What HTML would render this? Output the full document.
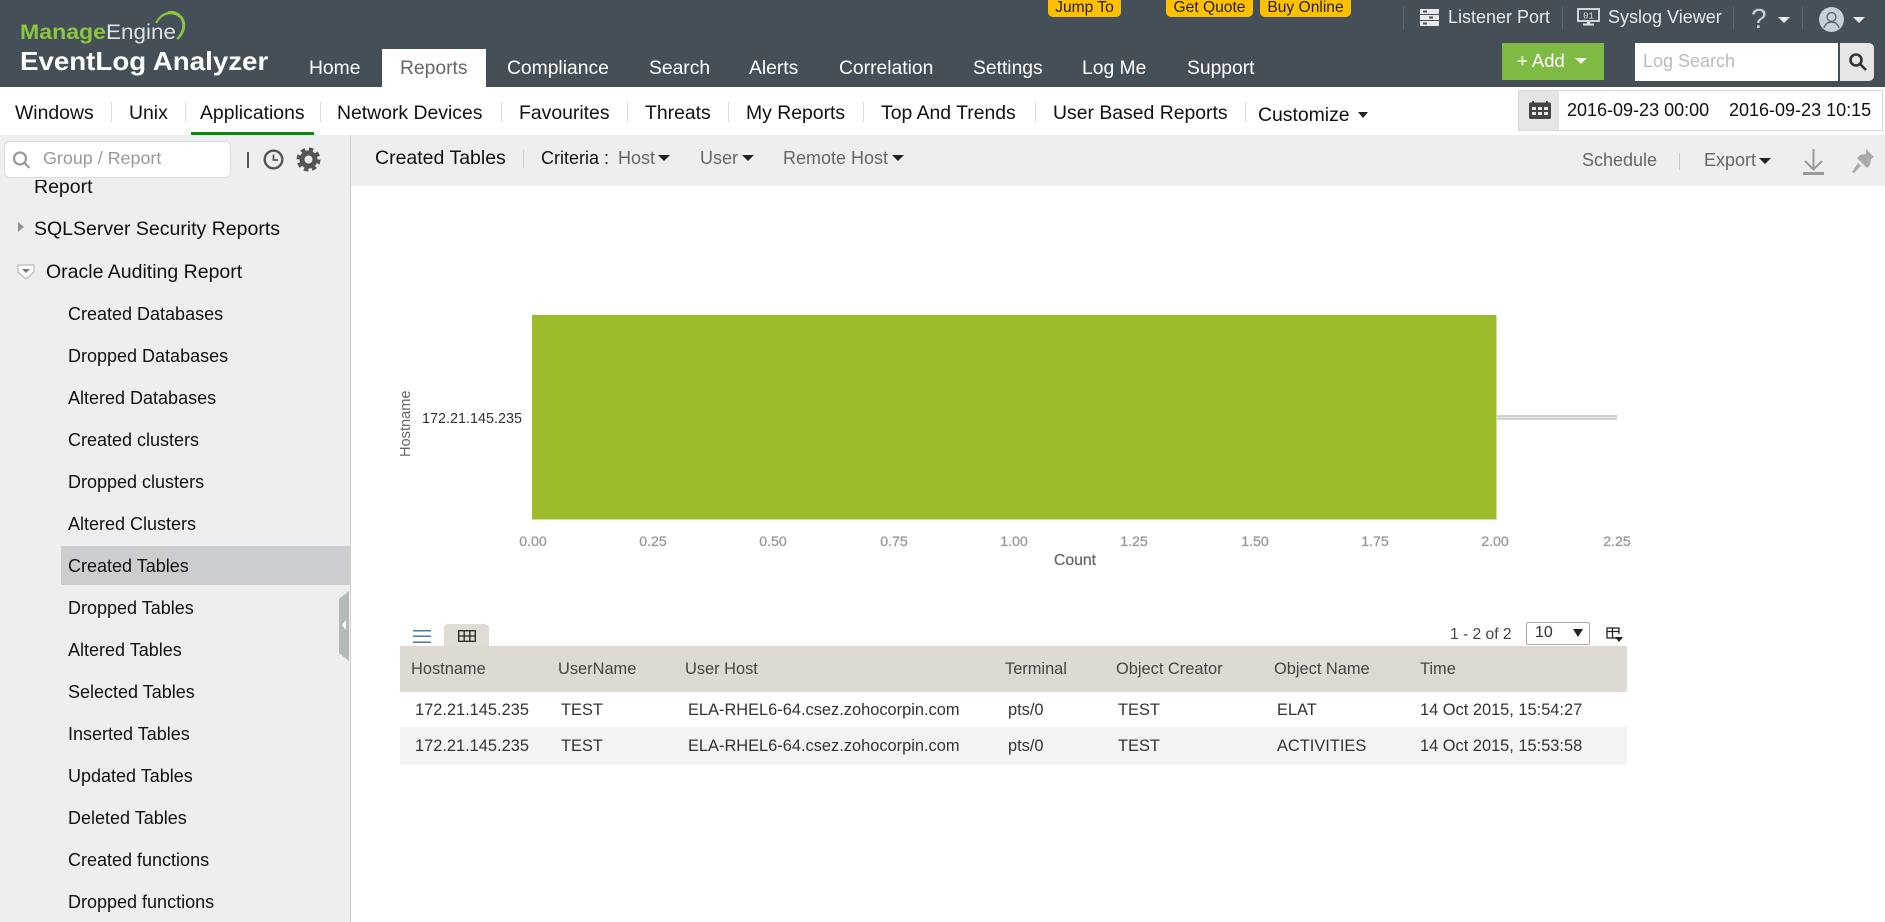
<!DOCTYPE html>
<html><head><meta charset="utf-8"><title>EventLog Analyzer</title>
<style>
html,body{margin:0;padding:0;background:#fff}
body{width:1885px;height:922px;position:relative;overflow:hidden;font-family:"Liberation Sans",Arial,sans-serif;color:#111}
div,span,svg{position:absolute}
.t{white-space:nowrap;line-height:20px;height:20px}
.nav{font-size:19.3px;color:#fff;top:59px}
.sub{font-size:19.4px;color:#111;top:103px}
.sep{width:1px;height:20px;top:102px;background:#d6dbe0}
.hs{width:1px;background:#5d6871;top:7px;height:22px}
.yb{background:#ffc000;top:0;height:17px;border-radius:0 0 5px 5px;font-size:15.6px;line-height:15px;color:#222;text-align:center}
.si{font-size:18px;left:68px;color:#111}
.car{width:0;height:0;border-left:6px solid transparent;border-right:6px solid transparent;border-top:6px solid #222}
.g{font-size:18px;color:#666}
.th{font-size:16.4px;color:#444;top:659px}
.td{font-size:16.4px;color:#333}
.tk{font-size:14.2px;color:#999;top:532px;width:60px;text-align:center;-webkit-text-stroke:.3px #999}
</style></head><body>

<!-- header -->
<div style="left:0;top:0;width:1885px;height:87px;background:#444f58"></div>
<div class="t" style="left:20px;top:23px;font-size:21px;font-weight:bold;color:#8cc63f;transform-origin:0 50%;transform:scaleX(1.1)">Manage</div>
<div class="t" style="left:106px;top:23px;font-size:21px;color:#dfe3e6;transform-origin:0 50%;transform:scaleX(1.07)">Engine</div>
<svg style="left:150px;top:8px" width="40" height="34" viewBox="0 0 40 34" fill="none" stroke="#8cc63f"><path d="M6 15C12 4 24 1 31 9c4 6 3 15-4 22" stroke-width="2"/><path d="M12 8c8-5 17-2 20 4 3 6 1 13-4 19" stroke-width="1.600"/><path d="M18 4c7-2 14 3 16 9 2 7-1 13-6 18" stroke-width="1.300"/></svg>
<div class="t" style="left:20px;top:49px;height:24px;line-height:24px;font-size:26px;font-weight:bold;color:#fff;transform-origin:0 50%;transform:scaleX(1.065)">EventLog Analyzer</div>

<div style="left:382px;top:49px;width:104px;height:38px;background:#fff"></div>
<div class="t nav" style="left:309px">Home</div>
<div class="t nav" style="left:400px;color:#6b6663">Reports</div>
<div class="t nav" style="left:507px">Compliance</div>
<div class="t nav" style="left:649px">Search</div>
<div class="t nav" style="left:749px">Alerts</div>
<div class="t nav" style="left:839px">Correlation</div>
<div class="t nav" style="left:973px">Settings</div>
<div class="t nav" style="left:1082px">Log Me</div>
<div class="t nav" style="left:1187px">Support</div>

<div class="yb" style="left:1048px;width:73px">Jump To</div>
<div class="yb" style="left:1166px;width:87px">Get Quote</div>
<div class="yb" style="left:1260px;width:91px">Buy Online</div>

<div class="hs" style="left:1403px"></div>
<svg style="left:1420px;top:9px" width="19" height="17" viewBox="0 0 19 17"><rect width="19" height="5" fill="#e8eaec"/><rect y="6" width="19" height="5" fill="#e8eaec"/><rect y="12" width="19" height="5" fill="#e8eaec"/><rect x="3" y="1.500" width="4" height="2" fill="#444f58"/><rect x="9" y="7.500" width="4" height="2" fill="#444f58"/><rect x="3" y="13.500" width="4" height="2" fill="#444f58"/></svg>
<div class="t" style="left:1448px;top:7px;font-size:18px;color:#e8eaec">Listener Port</div>
<div class="hs" style="left:1562px"></div>
<svg style="left:1577px;top:8px" width="23" height="18" viewBox="0 0 23 18"><rect x="1" y="1" width="21" height="12" fill="none" stroke="#e0e3e6" stroke-width="1.800"/><rect x="6" y="15.500" width="11" height="2" fill="#e0e3e6"/><rect x="10" y="13" width="3" height="3" fill="#e0e3e6"/><text x="11.500" y="10.500" font-size="9" text-anchor="middle" fill="#e0e3e6" font-family="Liberation Mono">01</text></svg>
<div class="t" style="left:1608px;top:7px;font-size:18px;color:#e8eaec">Syslog Viewer</div>
<div class="hs" style="left:1733px"></div>
<div class="t" style="left:1751px;top:8px;font-size:28px;line-height:22px;height:22px;color:#c9ced2">?</div>
<div class="car" style="left:1778px;top:17px;border-top:6px solid #e8eaec"></div>
<div class="hs" style="left:1802px"></div>
<svg style="left:1819px;top:7px" width="25" height="25" viewBox="0 0 25 25"><circle cx="12.500" cy="12.500" r="12.500" fill="#c5d1d8"/><circle cx="12.500" cy="10" r="4.400" fill="none" stroke="#5a6670" stroke-width="1.400"/><path d="M5 21c1-4 4-6 7.500-6s6.500 2 7.500 6" fill="none" stroke="#5a6670" stroke-width="1.400"/></svg>
<div class="car" style="left:1853px;top:17px;border-top:6px solid #e8eaec"></div>

<div style="left:1502px;top:43px;width:102px;height:37px;background:#7fba45"></div>
<div class="t" style="left:1517px;top:51px;font-size:18.500px;color:#fff"><span style="position:static;color:#dcecc8;font-weight:bold">+</span> Add</div>
<div class="car" style="left:1575px;top:58px;border-left-width:6.500px;border-right-width:6.500px;border-top:6px solid #eef5e4"></div>

<div style="left:1635px;top:43px;width:203px;height:38px;background:#fff"></div>
<div class="t" style="left:1643px;top:51px;font-size:18px;color:#bbb">Log Search</div>
<div style="left:1840px;top:43px;width:34px;height:38px;background:#e6e6e4;border-radius:0 5px 5px 0"></div>
<svg style="left:1848px;top:52px" width="20" height="20" viewBox="0 0 20 20" fill="none" stroke="#333" stroke-width="2.600"><circle cx="8" cy="8" r="5.500"/><path d="M12 12l6 6"/></svg>

<!-- subnav -->
<div class="t sub" style="left:15px">Windows</div><div class="sep" style="left:111px"></div>
<div class="t sub" style="left:129px">Unix</div><div class="sep" style="left:185px"></div>
<div class="t sub" style="left:200px">Applications</div><div class="sep" style="left:320px"></div>
<div style="left:191px;top:132px;width:123px;height:3px;background:#0a8a0a"></div>
<div class="t sub" style="left:337px">Network Devices</div><div class="sep" style="left:501px"></div>
<div class="t sub" style="left:519px">Favourites</div><div class="sep" style="left:627px"></div>
<div class="t sub" style="left:645px">Threats</div><div class="sep" style="left:728px"></div>
<div class="t sub" style="left:746px">My Reports</div><div class="sep" style="left:863px"></div>
<div class="t sub" style="left:881px">Top And Trends</div><div class="sep" style="left:1035px"></div>
<div class="t sub" style="left:1053px">User Based Reports</div><div class="sep" style="left:1245px"></div>
<div class="t sub" style="left:1258px;top:105px">Customize</div>
<div class="car" style="left:1358px;top:112px;border-left-width:5px;border-right-width:5px"></div>

<div style="left:1518px;top:90px;width:363px;height:39px;border:1px solid #d8d8d8"></div>
<div style="left:1519px;top:91px;width:40px;height:39px;background:#e5e5e5"></div>
<svg style="left:1529px;top:101px" width="22" height="18" viewBox="0 0 22 18"><rect x="0" y="1.500" width="22" height="16.500" rx="1.500" fill="#444"/><rect x="3" y="0" width="2" height="3" fill="#444"/><rect x="17" y="0" width="2" height="3" fill="#444"/><g fill="#e5e5e5"><rect x="3" y="6" width="4" height="3"/><rect x="9" y="6" width="4" height="3"/><rect x="15" y="6" width="4" height="3"/><rect x="3" y="11" width="4" height="3"/><rect x="9" y="11" width="4" height="3"/><rect x="15" y="11" width="4" height="3"/></g></svg>
<div class="t" style="left:1567px;top:100px;font-size:18px;color:#111">2016-09-23 00:00</div>
<div class="t" style="left:1729px;top:100px;font-size:18px;color:#111">2016-09-23 10:15</div>

<!-- sidebar -->
<div style="left:0;top:135px;width:350px;height:787px;background:#edeef0;border-right:1px solid #d0d0d0"></div>
<div style="left:0;top:180px;width:350px;height:742px;overflow:hidden">
 <div class="t" style="left:34px;top:-3px;font-size:19.500px">Report</div>
 <div style="left:18px;top:42px;width:0;height:0;border-top:5.500px solid transparent;border-bottom:5.500px solid transparent;border-left:6px solid #8c9296"></div>
 <div class="t" style="left:34px;top:39px;font-size:19.500px">SQLServer Security Reports</div>
 <svg style="left:17px;top:84px" width="18" height="16" viewBox="0 0 18 16"><path d="M1 1h16v7l-8 7-8-7z" fill="#fff" stroke="#aab" stroke-width="1"/><path d="M5 5h8l-4 4z" fill="#777"/></svg>
 <div class="t" style="left:46px;top:82px;font-size:19.500px">Oracle Auditing Report</div>
 <div style="left:61px;top:366px;width:289px;height:39px;background:#cbced0"></div>
 <div class="t si" style="top:124px">Created Databases</div>
 <div class="t si" style="top:166px">Dropped Databases</div>
 <div class="t si" style="top:208px">Altered Databases</div>
 <div class="t si" style="top:250px">Created clusters</div>
 <div class="t si" style="top:292px">Dropped clusters</div>
 <div class="t si" style="top:334px">Altered Clusters</div>
 <div class="t si" style="top:376px">Created Tables</div>
 <div class="t si" style="top:418px">Dropped Tables</div>
 <div class="t si" style="top:460px">Altered Tables</div>
 <div class="t si" style="top:502px">Selected Tables</div>
 <div class="t si" style="top:544px">Inserted Tables</div>
 <div class="t si" style="top:586px">Updated Tables</div>
 <div class="t si" style="top:628px">Deleted Tables</div>
 <div class="t si" style="top:670px">Created functions</div>
 <div class="t si" style="top:712px">Dropped functions</div>
</div>
<div style="left:4px;top:141px;width:225px;height:35px;background:#fff;border:1px solid #ddd;border-radius:6px"></div>
<svg style="left:12px;top:151px" width="19" height="18" viewBox="0 0 19 18" fill="none" stroke="#999" stroke-width="2.200"><circle cx="8" cy="7.500" r="6"/><path d="M12.500 12l5 5"/></svg>
<div class="t" style="left:43px;top:148px;font-size:17.900px;color:#999">Group / Report</div>
<div style="left:247px;top:152px;width:2px;height:16px;background:#555"></div>
<svg style="left:263px;top:149px" width="21" height="21" viewBox="0 0 21 21" fill="none" stroke="#555"><circle cx="10.500" cy="10.500" r="8.800" stroke-width="2.400"/><path d="M10.500 5.500v5.500h4.500" stroke-width="1.800"/></svg>
<svg style="left:296px;top:147px" width="25" height="25" viewBox="0 0 25 25" fill="none" stroke="#555"><circle cx="12.500" cy="12.500" r="6.500" stroke-width="5"/><circle cx="12.500" cy="12.500" r="10" stroke-width="4" stroke-dasharray="4.300 3.560"/></svg>

<svg style="left:339px;top:591px" width="11" height="70" viewBox="0 0 11 70"><path d="M10 0L0 8v54l10 8z" fill="#b3babc"/><path d="M7 29v10l-4-5z" fill="#fff"/></svg>

<!-- toolbar -->
<div style="left:351px;top:135px;width:1534px;height:51px;background:#edeef0"></div>
<div class="t" style="left:375px;top:148px;font-size:19.500px;color:#111">Created Tables</div>
<div style="left:523px;top:150px;width:1px;height:18px;background:#c8d0d8"></div>
<div class="t" style="left:541px;top:148px;font-size:18px;color:#111">Criteria :</div>
<div class="t g" style="left:618px;top:148px">Host</div><div class="car" style="left:658px;top:155px"></div>
<div class="t g" style="left:700px;top:148px">User</div><div class="car" style="left:742px;top:155px"></div>
<div class="t g" style="left:783px;top:148px">Remote Host</div><div class="car" style="left:892px;top:155px"></div>
<div class="t g" style="left:1582px;top:150px">Schedule</div>
<div style="left:1679px;top:153px;width:1px;height:17px;background:#c8c8c8"></div>
<div class="t g" style="left:1704px;top:150px">Export</div><div class="car" style="left:1759px;top:158px"></div>
<svg style="left:1803px;top:149px" width="21" height="26" viewBox="0 0 21 26" fill="none" stroke="#999" stroke-width="2"><path d="M10.500 0v20M2 12l8.500 8.500L19 12"/><path d="M0 24.500h21" stroke-width="3"/></svg>
<svg style="left:1851px;top:148px" width="24" height="28" viewBox="0 0 24 28" fill="#aaa"><path d="M15 1l8 8-3 2-1 6-3 3-10-10 3-3 6-1z"/><path d="M7 15l-6 9 2 1 7-7z"/></svg>

<!-- chart -->
<div style="left:1496px;top:415px;width:121px;height:5px;background:#d2d2d2"></div>
<div style="left:1496px;top:417px;width:121px;height:1px;background:#e4e4e4"></div>
<div style="left:532px;top:315px;width:964px;height:204px;background:#9dbc2c;border-right:1px solid #cfe09c;border-bottom:1px solid #cfe09c"></div>
<div class="t" style="left:376px;top:417px;width:60px;text-align:center;font-size:14.600px;color:#666;transform:rotate(-90deg)">Hostname</div>
<div class="t" style="left:422px;top:409px;font-size:14.400px;color:#333">172.21.145.235</div>
<div class="t tk" style="left:503px">0.00</div>
<div class="t tk" style="left:623px">0.25</div>
<div class="t tk" style="left:743px">0.50</div>
<div class="t tk" style="left:864px">0.75</div>
<div class="t tk" style="left:984px">1.00</div>
<div class="t tk" style="left:1104px">1.25</div>
<div class="t tk" style="left:1225px">1.50</div>
<div class="t tk" style="left:1345px">1.75</div>
<div class="t tk" style="left:1465px">2.00</div>
<div class="t tk" style="left:1587px">2.25</div>
<div class="t" style="left:1045px;top:551px;width:60px;text-align:center;font-size:15.800px;color:#666;-webkit-text-stroke:.2px #666">Count</div>

<!-- table -->
<svg style="left:413px;top:630px" width="18" height="13" viewBox="0 0 18 13" fill="#4a7a9c"><rect width="18" height="1.500"/><rect y="5.500" width="18" height="1.500"/><rect y="11.500" width="18" height="1.500"/></svg>
<div style="left:444px;top:624px;width:45px;height:22px;background:#e0dcd5;border-radius:4px 4px 0 0"></div>
<svg style="left:458px;top:630px" width="18" height="12" viewBox="0 0 18 12" fill="none" stroke="#222" stroke-width="1.300"><rect x=".7" y=".7" width="16.600" height="10.600"/><path d="M.7 6h16.600M6.200.7v10.600M11.800.7v10.600"/></svg>
<div class="t" style="left:1450px;top:625px;font-size:15.600px;color:#444">1 - 2 of 2</div>
<div style="left:1526px;top:622px;width:62px;height:21px;border:1px solid #aaa;border-radius:2px;background:#fff"></div>
<div class="t" style="left:1535px;top:623px;font-size:16px;color:#333">10</div>
<svg style="left:1573px;top:629px" width="10" height="8" viewBox="0 0 10 8"><path d="M0 0h10L5 8z" fill="#222"/></svg>
<svg style="left:1606px;top:627px" width="18" height="16" viewBox="0 0 18 16" fill="none" stroke="#222" stroke-width="1.300"><path d="M12 11H1V1h12v6M1 4.500h12M6.500 1v10"/><path d="M9 10h8l-4 5z" fill="#222" stroke="none"/></svg>

<div style="left:400px;top:646px;width:1227px;height:46px;background:#dedad3"></div>
<div style="left:400px;top:727px;width:1227px;height:38px;background:#f4f3f1"></div>
<div class="t th" style="left:411px">Hostname</div>
<div class="t th" style="left:558px">UserName</div>
<div class="t th" style="left:685px">User Host</div>
<div class="t th" style="left:1005px">Terminal</div>
<div class="t th" style="left:1116px">Object Creator</div>
<div class="t th" style="left:1274px">Object Name</div>
<div class="t th" style="left:1420px">Time</div>

<div class="t td" style="left:415px;top:700px">172.21.145.235</div>
<div class="t td" style="left:561px;top:700px">TEST</div>
<div class="t td" style="left:688px;top:700px">ELA-RHEL6-64.csez.zohocorpin.com</div>
<div class="t td" style="left:1008px;top:700px">pts/0</div>
<div class="t td" style="left:1118px;top:700px">TEST</div>
<div class="t td" style="left:1277px;top:700px">ELAT</div>
<div class="t td" style="left:1420px;top:700px">14 Oct 2015, 15:54:27</div>

<div class="t td" style="left:415px;top:736px">172.21.145.235</div>
<div class="t td" style="left:561px;top:736px">TEST</div>
<div class="t td" style="left:688px;top:736px">ELA-RHEL6-64.csez.zohocorpin.com</div>
<div class="t td" style="left:1008px;top:736px">pts/0</div>
<div class="t td" style="left:1118px;top:736px">TEST</div>
<div class="t td" style="left:1277px;top:736px">ACTIVITIES</div>
<div class="t td" style="left:1420px;top:736px">14 Oct 2015, 15:53:58</div>

</body></html>
